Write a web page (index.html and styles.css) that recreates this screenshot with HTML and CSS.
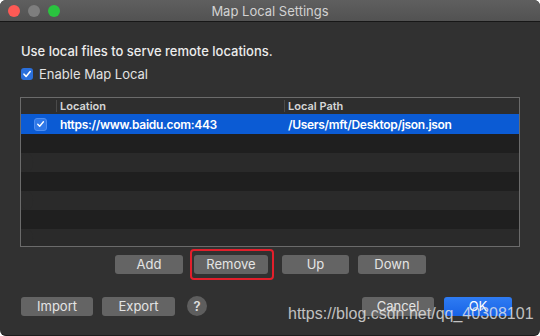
FILE: index.html
```html
<!DOCTYPE html>
<html>
<head>
<meta charset="utf-8">
<link rel="stylesheet" href="styles.css">
</head>
<body>
<div class="window">
  <div class="titlebar">
    <div class="lights">
      <span class="light red"></span>
      <span class="light gray"></span>
      <span class="light green"></span>
    </div>
    <div class="title">Map Local Settings</div>
    <div></div>
  </div>
  <div class="content">
    <div class="heading">Use local files to serve remote locations.</div>
    <label class="enable"><span class="check"><svg viewBox="0 0 12 12" width="12" height="12"><path d="M3 6.2 L5.1 8.4 L9.2 3.6" fill="none" stroke="#fff" stroke-width="1.6" stroke-linecap="round" stroke-linejoin="round"/></svg></span>Enable Map Local</label>
    <div class="table">
      <div class="row head">
        <div class="c0"></div>
        <div class="c1">Location</div>
        <div class="c2">Local Path</div>
      </div>
      <div class="row sel">
        <div class="c0"><span class="rcheck"><svg viewBox="0 0 12 12" width="12" height="12"><path d="M3 6.2 L5.1 8.4 L9.2 3.6" fill="none" stroke="#fff" stroke-width="1.5" stroke-linecap="round" stroke-linejoin="round"/></svg></span></div>
        <div class="c1">https://www.baidu.com:443</div>
        <div class="c2">/Users/mft/Desktop/json.json</div>
      </div>
      <div class="stripe dark"></div>
      <div class="stripe light"></div>
      <div class="stripe dark"></div>
      <div class="stripe light"></div>
      <div class="stripe dark"></div>
      <div class="stripe light"></div>
    </div>
    <div class="actions">
      <button class="btn w68">Add</button>
      <button class="btn w74 marked">Remove</button>
      <button class="btn w67">Up</button>
      <button class="btn w68">Down</button>
    </div>
    <div class="footer">
      <div class="left">
        <button class="btn w72">Import</button>
        <button class="btn w73">Export</button>
        <span class="help">?</span>
      </div>
      <div class="right">
        <button class="btn w72">Cancel</button>
        <button class="btn w68 ok">OK</button>
      </div>
    </div>
  </div>
  <div class="watermark">https://blog.csdn.net/qq_40308101</div>
</div>
</body>
</html>
```
FILE: styles.css
```css
* { box-sizing: border-box; }
html, body { margin: 0; padding: 0; background: #ffffff; }
body { font-family: Inter, "Liberation Sans", sans-serif; }

.window {
  position: relative;
  width: 540px;
  height: 336px;
  background: #313131;
  border-radius: 6px;
  overflow: hidden;
  border-bottom: 1px solid #1c1c1c;
}

.titlebar {
  height: 22px;
  display: grid;
  grid-template-columns: 1fr auto 1fr;
  align-items: center;
  background: linear-gradient(#5f5f5f, #525252);
  border-bottom: 1px solid #171717;
}
.lights { display: flex; gap: 8px; padding-left: 8px; }
.light { width: 12px; height: 12px; border-radius: 50%; display: block; }
.red { background: #fd5a55; }
.gray { background: #7e7e7e; }
.green { background: #2ac33f; }
.title { color: #d2d2d2; font-size: 13px; letter-spacing: 0; }

.content { padding: 21px 20px 0 20px; }

.heading {
  color: #ececec;
  font-size: 13px;
  font-weight: 500;
  line-height: 16px;
  padding-left: 1px;
}

.enable {
  display: flex;
  align-items: center;
  gap: 6px;
  margin-top: 7px;
  height: 16px;
  color: #e2e2e2;
  font-size: 13px;
  padding-left: 1px;
}
.check {
  width: 12px; height: 12px;
  border-radius: 3px;
  background: #2a6fdb;
  display: flex;
}

.table {
  margin-top: 15px;
  height: 150px;
  border: 1px solid #6b6b6b;
  overflow: hidden;
  background: #2a2a2a;
}
.row {
  display: grid;
  grid-template-columns: 35px 228px 1fr;
  height: 19px;
  align-items: center;
}
.row.head {
  height: 16px;
  background: #2e2e2e;
  color: #d6d6d6;
  font-size: 11px;
  font-weight: 600;
}
.row.head .c1, .row.head .c2 { border-left: 1px solid #4a4a4a; height: 12px; line-height: 12px; padding-left: 3px; }
.row.sel {
  height: 20px;
  background: #0b5bd4;
  color: #ffffff;
  font-size: 12px;
  font-weight: 600;
  letter-spacing: -0.3px;
}
.row.sel .c1, .row.sel .c2 { padding-left: 4px; }
.stripe { height: 19px; }
.stripe.dark { background: #1f1f1f; }
.stripe.light { background: #2a2a2a; }
.c0 { display: flex; justify-content: center; }
.rcheck {
  width: 13px; height: 13px;
  border-radius: 3px;
  background: #2f78e8;
  border: 1px solid #4f8ef0;
  display: flex; align-items: center; justify-content: center;
  margin-left: 4px;
}

.btn {
  height: 19px;
  border: none;
  border-radius: 3px;
  background: #646464;
  color: #e4e4e4;
  font-family: Inter, "Liberation Sans", sans-serif;
  font-size: 13px;
  padding: 0;
  line-height: 19px;
}
.w67 { width: 67px; }
.w68 { width: 68px; }
.w72 { width: 72px; }
.w73 { width: 73px; }
.w74 { width: 74px; }

.actions {
  margin-top: 8px;
  display: flex;
  justify-content: center;
  gap: 0;
  padding-left: 1px;
}
.actions .btn:nth-child(1) { margin-right: 11px; }
.actions .btn:nth-child(2) { margin-right: 14px; }
.actions .btn:nth-child(3) { margin-right: 9px; }

.marked { position: relative; }
.marked::after {
  content: "";
  position: absolute;
  left: -4px; right: -6px; top: -6px; bottom: -6px;
  border: 2px solid #e21f2b;
  border-radius: 4px;
}

.footer {
  margin-top: 22px;
  display: flex;
  justify-content: space-between;
  align-items: center;
  padding-left: 1px;
  padding-right: 8px;
}
.left, .right { display: flex; align-items: center; }
.left .btn:nth-child(1) { margin-right: 9px; }
.left .btn:nth-child(2) { margin-right: 12px; }
.right .btn:nth-child(1) { margin-right: 10px; }
.help {
  width: 20px; height: 20px;
  border-radius: 50%;
  background: #5e5e5e;
  color: #e0e0e0;
  font-size: 13px;
  font-weight: 600;
  display: flex; align-items: center; justify-content: center;
}
.ok {
  background: linear-gradient(#2f7cf3, #1863e6);
  color: #ffffff;
}

.watermark {
  position: absolute;
  left: 288px;
  top: 305px;
  font-family: "Liberation Sans", Arial, sans-serif;
  font-size: 16px;
  line-height: 18px;
  color: rgba(235, 235, 235, 0.78);
  white-space: nowrap;
}
```
